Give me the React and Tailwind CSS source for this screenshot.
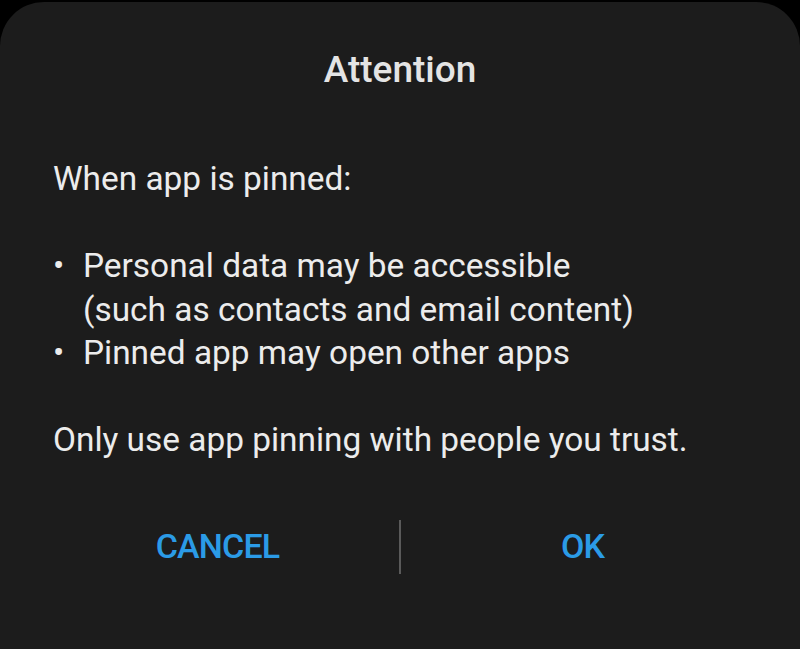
import React from 'react';

const bullets = [
  ['Personal data may be accessible', '(such as contacts and email content)'],
  ['Pinned app may open other apps'],
];

export default function App() {
  return (
    <div className="h-[649px] w-[800px] overflow-hidden bg-black pt-[2px]" style={{ fontFamily: 'Roboto, "Noto Sans", sans-serif' }}>
      <div className="flex h-full flex-col rounded-t-[44px] bg-[#1c1c1c]">
        <h1 className="pt-[46px] text-center text-[37px] font-medium leading-[44px] text-[#e4e4e4]">Attention</h1>

        <div className="px-[53px] pt-[65px] text-[33.4px] leading-[43.5px] text-[#ececec]">
          <p>When app is pinned:</p>
          <ul className="mt-[43.5px]">
            {bullets.map((lines) => (
              <li key={lines[0]} className="flex">
                <span className="w-[30px] shrink-0">•</span>
                <span>
                  {lines.map((l) => (
                    <span key={l} className="block">{l}</span>
                  ))}
                </span>
              </li>
            ))}
          </ul>
          <p className="mt-[43.5px]">Only use app pinning with people you trust.</p>
        </div>

        <div className="mt-[58px] flex items-center px-[36px]">
          <button type="button" className="flex-1 text-center text-[34px] font-medium tracking-tight text-[#2b9be6]">
            CANCEL
          </button>
          <div className="h-[54px] w-[2px] bg-[#5a5a5a]" />
          <button type="button" className="flex-1 text-center text-[34px] font-medium tracking-tight text-[#2b9be6]">
            OK
          </button>
        </div>
      </div>
    </div>
  );
}
